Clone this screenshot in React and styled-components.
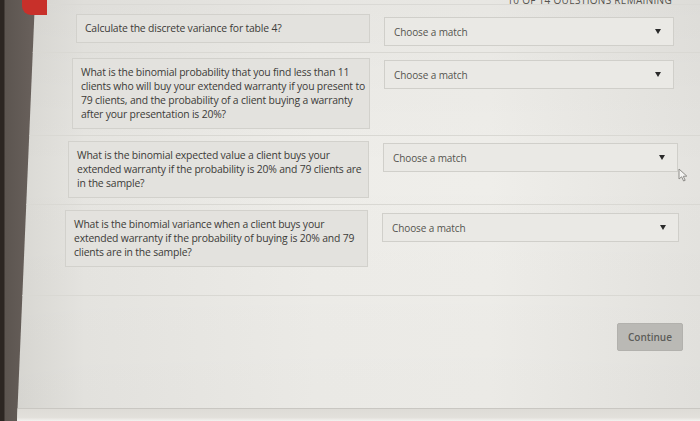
import styled, { createGlobalStyle } from 'styled-components'

const GlobalStyle = createGlobalStyle`
  html, body {
    margin: 0;
    padding: 0;
    background: #3a332e;
  }
  * { box-sizing: border-box; }
`

const rows = [
  { text: 'Calculate the discrete variance for table 4?', left: 76, boxW: 294, right: 26, selTop: 3 },
  { text: 'What is the binomial probability that you find less than 11 clients who will buy your extended warranty if you present to 79 clients, and the probability of a client buying a warranty after your presentation is 20%?', left: 72, boxW: 298, right: 26, selTop: 2 },
  { text: 'What is the binomial expected value a client buys your extended warranty if the probability is 20% and 79 clients are in the sample?', left: 68, boxW: 301, right: 22, selTop: 2 },
  { text: 'What is the binomial variance when a client buys your extended warranty if the probability of buying is 20% and 79 clients are in the sample?', left: 65, boxW: 303, right: 21, selTop: 3, last: true },
]

function App() {
  return (
    <Screen>
      <GlobalStyle />
      <Panel>
        <Header>
          <Remaining>10 of 14 questions remaining</Remaining>
        </Header>
        <List>
          {rows.map((r, i) => (
            <Row key={i} $left={r.left} $boxW={r.boxW} $right={r.right} $last={r.last}>
              <Question>{r.text}</Question>
              <Select $top={r.selTop}>
                <span>Choose a match</span>
                <Caret />
              </Select>
            </Row>
          ))}
        </List>
        <Footer>
          <ContinueButton>Continue</ContinueButton>
        </Footer>
        <BottomEdge />
      </Panel>
      <RedTab />
      <Pointer width="11" height="14" viewBox="0 0 11 14">
        <path d="M1 1 L1 11 L3.6 8.8 L5.6 13 L7.2 12.3 L5.3 8.3 L8.8 8.1 Z" fill="#f4f4f2" stroke="#8d8c88" strokeWidth="1" strokeLinejoin="round" />
      </Pointer>
    </Screen>
  )
}

export default App

const Screen = styled.div`
  position: relative;
  width: 700px;
  height: 421px;
  overflow: hidden;
  background: linear-gradient(90deg, #2c2622 0, #2c2622 4px, #5c5550 5px, #675f5a 30px);
  font-family: 'Open Sans', 'Noto Sans', sans-serif;
`

const Panel = styled.div`
  display: flex;
  flex-direction: column;
  height: 100%;
  clip-path: polygon(35px 0, 100% 0, 100% 100%, 17px 100%);
  background:
    linear-gradient(180deg, rgba(0,0,0,0.03) 0%, rgba(0,0,0,0) 40%, rgba(0,0,0,0.02) 100%),
    linear-gradient(90deg, #d6d5d0 0%, #e6e5e1 12%, #eeede9 45%, #efeeea 70%, #e4e3df 100%);
`

const Header = styled.div`
  height: 5px;
  display: flex;
  justify-content: flex-end;
  align-items: flex-end;
  padding-right: 28px;
  border-bottom: 1px solid #dad9d5;
  overflow: hidden;
`

const Remaining = styled.div`
  font-size: 10px;
  line-height: 10px;
  margin-bottom: -1px;
  text-transform: uppercase;
  letter-spacing: 0.3px;
  color: #55544f;
`

const List = styled.div`
  display: flex;
  flex-direction: column;
  padding-top: 4px;
`

const Row = styled.div`
  display: grid;
  grid-template-columns: ${p => p.$boxW}px 1fr;
  column-gap: 14px;
  align-items: start;
  padding: 5px ${p => p.$right}px ${p => (p.$last ? 28 : 6)}px ${p => p.$left}px;
  border-bottom: 1px solid #d9d8d3;
`

const Question = styled.div`
  background: #e3e2de;
  border: 1px solid #d2d1cc;
  padding: 6px 3px 7px 8px;
  font-size: 10.4px;
  line-height: 14px;
  color: #3c3b38;
  letter-spacing: -0.18px;
`

const Select = styled.div`
  margin-top: ${p => p.$top}px;
  height: 29px;
  display: flex;
  align-items: center;
  justify-content: space-between;
  padding: 0 12px 0 9px;
  background: #eae9e5;
  border: 1px solid #d0cfca;
  font-size: 10px;
  color: #55544f;
  letter-spacing: -0.1px;
`

const Caret = styled.span`
  width: 0;
  height: 0;
  border-left: 3.5px solid transparent;
  border-right: 3.5px solid transparent;
  border-top: 5px solid #2a2a2a;
`

const Footer = styled.div`
  display: flex;
  justify-content: flex-end;
  padding: 27px 17px 0 0;
  flex: 1;
`

const ContinueButton = styled.button`
  width: 66px;
  height: 28px;
  border: 1px solid #b2b1ad;
  border-radius: 2px;
  background: #bab9b5;
  color: #5c5c59;
  font-family: 'Open Sans', 'Noto Sans', sans-serif;
  font-size: 10px;
  font-weight: 600;
  padding: 0;
`

const BottomEdge = styled.div`
  height: 13px;
  border-top: 1px solid #c9c7c2;
  background: linear-gradient(180deg, #dedcd7 0%, #e2e0db 70%, #f3f2ef 100%);
`

const RedTab = styled.div`
  position: absolute;
  left: 22px;
  top: 0;
  width: 25px;
  height: 15px;
  background: #c8302a;
  border-bottom-left-radius: 9px;
`

const Pointer = styled.svg`
  position: absolute;
  left: 678px;
  top: 168px;
`
